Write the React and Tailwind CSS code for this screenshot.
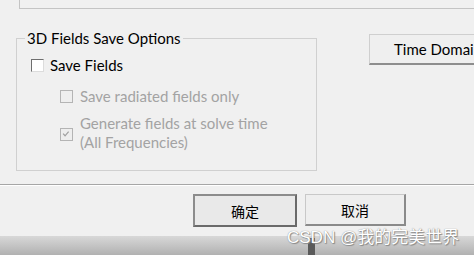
import React from "react";

const Box = ({ checked, disabled }) => (
  <span
    className={
      "inline-block w-[13px] h-[13px] shrink-0 border relative " +
      (disabled
        ? "border-[#b4b4b4] bg-[#eeeeee]"
        : "border-[#6e6e6e] border-r-[#dcdcdc] border-b-[#dcdcdc] bg-white")
    }
  >
    {checked && (
      <svg viewBox="0 0 13 13" className="absolute inset-0 w-[11px] h-[11px]">
        <path d="M2.5 5.5 L4.8 8 L9 3" fill="none" stroke="#a0a0a0" strokeWidth="1.4" />
      </svg>
    )}
  </span>
);

const App = () => {
  return (
    <div className="w-[474px] h-[255px] bg-[#f0f0f0] overflow-hidden relative font-['Lato','Noto_Sans_CJK_SC',sans-serif] text-[15px] text-black">
      {/* top panel edge */}
      <div className="ml-[19px] h-[9px] border-l border-b border-[#c4c4c4]" />

      <div className="flex h-[145px] mt-[21px]">
        <fieldset className="ml-[16px] w-[301px] shrink-0 h-[141px] border border-[#d0d0d0] px-0">
          <legend className="ml-[8px] px-[2px] leading-[16px]">3D Fields Save Options</legend>
          <div className="flex items-center h-[20px] mt-[9px] ml-[14px]">
            <Box />
            <span className="ml-[6px]">Save Fields</span>
          </div>
          <div className="flex items-center h-[20px] mt-[11px] ml-[43px] text-[#a3a3a3]">
            <Box disabled />
            <span className="ml-[7px]">Save radiated fields only</span>
          </div>
          <div className="flex items-start mt-[8px] ml-[43px] text-[#a3a3a3] leading-[19px]">
            <span className="mt-[12px]">
              <Box disabled checked />
            </span>
            <span className="ml-[7px]">
              Generate fields at solve time
              <br />
              (All Frequencies)
            </span>
          </div>
        </fieldset>
        <button className="ml-[52px] mt-[4px] w-[130px] h-[31px] shrink-0 bg-[#efefef] border border-[#cfcfcf] border-b-2 border-b-[#8e8e8e] border-r-[#a8a8a8] text-left pl-[24px] leading-[28px] whitespace-nowrap">
          Time Domain
        </button>
      </div>

      {/* separator */}
      <div className="h-[2px] mt-[9px] border-t border-[#a6a6a6] border-b border-b-white" />

      <div className="flex h-[50px] pt-[8px]">
        <button className="ml-[193px] w-[104px] h-[33px] bg-[#e9e9e9] border-2 border-[#6a6a6a] border-t-[#8c8c8c] border-l-[#8c8c8c] text-[14px] leading-[28px] font-['Noto_Sans_CJK_SC',sans-serif]">
          确定
        </button>
        <button className="ml-[8px] w-[101px] h-[32px] bg-[#eeeeee] border border-[#c8c8c8] border-b-2 border-r-2 border-b-[#8a8a8a] border-r-[#8a8a8a] text-[14px] leading-[28px] font-['Noto_Sans_CJK_SC',sans-serif]">
          取消
        </button>
      </div>

      {/* window beneath */}
      <div className="h-[20px] bg-gradient-to-b from-[#d8d8d8] to-[#afafaf] flex">
        <div className="ml-[308px] mt-[2px] w-[7px] bg-[#5a5a5a]" />
      </div>

      <div className="absolute left-[287px] top-[228px] text-[17px] leading-[20px] text-white font-['Liberation_Sans','Noto_Sans_CJK_SC',sans-serif] [text-shadow:0_0_1px_#7a7a7a,1px_1px_1px_#8a8a8a] whitespace-nowrap">
        CSDN @我的完美世界
      </div>
    </div>
  );
};

export default App;
